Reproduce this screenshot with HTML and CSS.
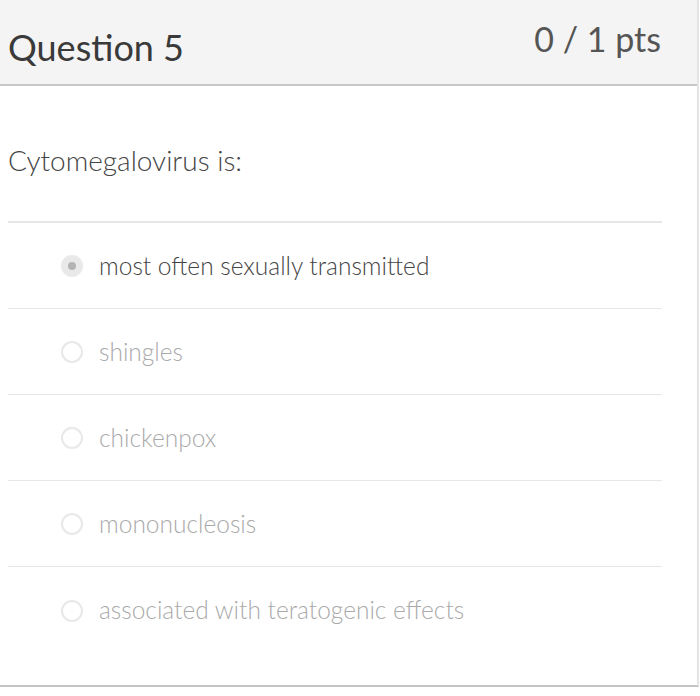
FILE: index.html
```html
<!DOCTYPE html>
<html>
<head>
<meta charset="utf-8">
<link rel="stylesheet" href="styles.css">
</head>
<body>
<div class="card">
  <div class="header">
    <div class="title">Question 5</div>
    <div class="pts">0 / 1 pts</div>
  </div>
  <div class="body">
    <div class="question">Cytomegalovirus is:</div>
    <div class="answers">
      <div class="answer selected"><span class="radio"></span><span class="label">most often sexually transmitted</span></div>
      <div class="answer"><span class="radio"></span><span class="label">shingles</span></div>
      <div class="answer"><span class="radio"></span><span class="label">chickenpox</span></div>
      <div class="answer"><span class="radio"></span><span class="label">mononucleosis</span></div>
      <div class="answer last"><span class="radio"></span><span class="label">associated with teratogenic effects</span></div>
    </div>
  </div>
</div>
</body>
</html>
```
FILE: styles.css
```css
html, body {
  margin: 0;
  padding: 0;
  background: #ffffff;
}
body {
  font-family: Lato, "Open Sans", sans-serif;
}
.card {
  width: 697px;
  border-right: 2px solid #e4e4e4;
  border-bottom: 2px solid #c4c4c4;
  background: #fff;
}
.header {
  height: 86px;
  background: #f4f4f4;
  border-bottom: 2px solid #c8c8c8;
  display: flex;
  justify-content: space-between;
  box-sizing: border-box;
  padding: 0 36px 0 8px;
}
.title {
  font-size: 36px;
  color: #3a3a3a;
  padding-top: 25px;
  line-height: 44px;
}
.pts {
  font-size: 34px;
  color: #555;
  padding-top: 18px;
  line-height: 42px;
}
.body {
  padding: 0 35px 0 8px;
}
.question {
  font-size: 28px;
  font-weight: 300;
  color: #444;
  padding-top: 57px;
  line-height: 34px;
  height: 137px;
  box-sizing: border-box;
  border-bottom: 2px solid #e6e6e6;
}
.answer {
  height: 86px;
  display: flex;
  align-items: center;
  border-bottom: 1px solid #e6e6e6;
  box-sizing: border-box;
  padding-left: 53px;
  font-size: 24.5px;
  font-weight: 300;
  color: #aaa;
}
.answer.last {
  border-bottom: none;
  height: 118px;
  align-items: flex-start;
  padding-top: 28px;
}
.answer.selected {
  color: #444;
}
.radio {
  width: 22px;
  height: 22px;
  border-radius: 50%;
  border: 2px solid #e8e8e8;
  box-sizing: border-box;
  margin-right: 16px;
  flex: none;
  position: relative;
}
.answer.last .radio {
  margin-top: 5px;
}
.selected .radio {
  background: #e9e9e9;
  border-color: #e9e9e9;
}
.selected .radio::after {
  content: "";
  position: absolute;
  left: 5px;
  top: 5px;
  width: 8px;
  height: 8px;
  border-radius: 50%;
  background: #b4b4b4;
}
```
